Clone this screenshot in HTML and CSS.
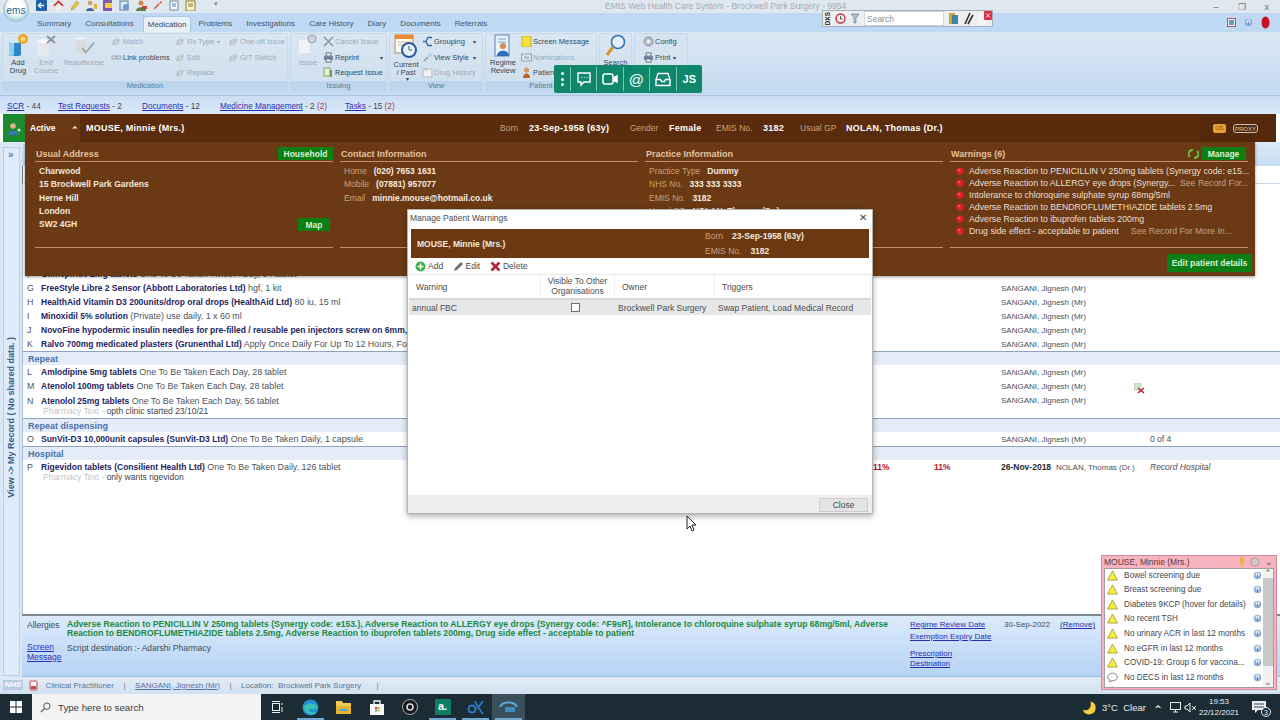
FILE: index.html
```html
<!DOCTYPE html>
<html lang="en">
<head>
  <meta charset="UTF-8" />
  <meta name="viewport" content="width=device-width, initial-scale=1.0"/>
  <title>EMIS Web Health Care System</title>
  <link rel="stylesheet" href="styles.css">
</head>
<body>
  <svg class="defs" width="0" height="0">
    <symbol id="pill" viewBox="0 0 12 12">
      <path d="M2 5l5-3 3 3-2 5H4z" fill="#c9ced4"/><path d="M4 10l-2-1 1-4" fill="none" stroke="#9ea6ae"/><path d="M7 6l2-3" stroke="#b4b9a0"/>
    </symbol>
    <symbol id="warn" viewBox="0 0 12 12">
      <path d="M6 1l5.400 10H.6z" fill="#f6ee3a" stroke="#8d8a3c" stroke-width=".8"/>
    </symbol>
    <symbol id="info" viewBox="0 0 10 10">
      <circle cx="5" cy="5" r="4.200" fill="#8fb0d6"/><circle cx="5" cy="4" r="2.200" fill="#dbe7f3"/><path d="M5 4v4" stroke="#5f86b4"/>
    </symbol>
    <symbol id="dot" viewBox="0 0 8 8">
      <circle cx="4" cy="4" r="3.600" fill="#e2202a"/><circle cx="3.200" cy="3" r="1" fill="#f26a6a"/>
    </symbol>
    <symbol id="balloon" viewBox="0 0 11 11">
      <ellipse cx="5.500" cy="5" rx="4.800" ry="3.800" fill="#fff" stroke="#7a8088"/><path d="M3 8l-1 2 3-1" fill="#fff" stroke="#7a8088" stroke-width=".7"/>
    </symbol>
  </svg>

  <div class="app">
    <div class="titlebar">
      <div class="orb"><span>ems</span></div>
      <div class="quick">
        <svg width="11" height="11" viewBox="0 0 11 11"><rect width="11" height="11" rx="1" fill="#1f5fb0"/><path d="M8 5.500H3m2-2.500L2.500 5.500 5 8" stroke="#fff" stroke-width="1.500" fill="none"/></svg>
        <svg width="11" height="11" viewBox="0 0 12 11"><path d="M1 6l5-5 5 5" stroke="#d0312d" stroke-width="1.800" fill="none"/><path d="M3 6v5h6V6" fill="#f2efe6"/></svg>
        <svg width="11" height="11" viewBox="0 0 11 11"><path d="M2 10l1-3 5-6 2 2-5 6z" fill="#ecc92e" stroke="#9b7f12" stroke-width=".5"/></svg>
        <svg width="11" height="11" viewBox="0 0 11 11"><circle cx="4" cy="3" r="2.300" fill="#d59a62"/><path d="M0 11c0-4 8-4 8 0z" fill="#3c68a8"/><path d="M8 4h3v5H8z" fill="#e2b33c"/></svg>
        <svg width="11" height="11" viewBox="0 0 11 11"><rect x="1" width="9" height="11" fill="#7d5bb0"/><rect x="3" y="3" width="7" height="5" fill="#f2cc44"/></svg>
        <svg width="11" height="11" viewBox="0 0 11 11"><rect x="1" y="1" width="8" height="9" fill="#dfe8f2" stroke="#5b7ea8"/><circle cx="7" cy="7" r="3" fill="#6e9ad0"/></svg>
        <svg width="11" height="11" viewBox="0 0 11 11"><circle cx="5" cy="3" r="2.500" fill="#d2854a"/><path d="M0 11c0-5 10-5 10 0z" fill="#4a8a4a"/><rect x="6" y="6" width="5" height="3" fill="#c43b32"/></svg>
        <svg width="11" height="11" viewBox="0 0 11 11"><path d="M1 10l3-2 6-6-1-1-6 6z" fill="#d64a2c"/><path d="M7 3l2 2" stroke="#f3f3f3"/></svg>
        <svg width="11" height="11" viewBox="0 0 11 11"><rect x="1" y="1" width="8" height="9" fill="#f4f6f8" stroke="#7a8a9a"/><path d="M3 4h4M3 6h4" stroke="#4a88c0"/></svg>
        <svg width="11" height="11" viewBox="0 0 11 11"><rect x="1" y="1" width="9" height="10" fill="#fbf2c4" stroke="#8a7a3a"/><path d="M3 4h5M3 6h5" stroke="#8a7a3a"/></svg>
        <span class="quick-more">▾</span>
      </div>
      <div class="title-text">EMIS Web Health Care System - Brockwell Park Surgery - 9954</div>
      <div class="win-controls"><span>–</span><span>❐</span><span>x</span></div>
    </div>

    <div class="tabs">
      <span class="tab">Summary</span>
      <span class="tab">Consultations</span>
      <span class="tab active">Medication</span>
      <span class="tab">Problems</span>
      <span class="tab">Investigations</span>
      <span class="tab">Care History</span>
      <span class="tab">Diary</span>
      <span class="tab">Documents</span>
      <span class="tab">Referrals</span>
      <div class="tab-icons">
        <svg width="9" height="9" viewBox="0 0 9 9"><rect x=".5" y=".5" width="8" height="8" fill="#f0f4f8" stroke="#c04a5a"/><rect x="2" y="2" width="5" height="5" fill="#6a94c8"/></svg>
        <svg width="9" height="9"><use href="#info"/></svg>
        <svg width="9" height="13" viewBox="0 0 9 13"><ellipse cx="4.500" cy="6.500" rx="4" ry="6" fill="#c8141e"/></svg>
      </div>
    </div>

    <div class="ribbon">
      <div class="group group-med">
        <div class="group-body">
          <div class="big btn-add">
            <svg width="22" height="24" viewBox="0 0 22 24"><rect x="2" y="7" width="12" height="15" rx="2" fill="#2f86c4"/><rect x="2" y="7" width="5" height="15" rx="2" fill="#8fd0ee"/><ellipse cx="8" cy="7" rx="6" ry="2" fill="#cfe9f6"/><circle cx="16" cy="5" r="5" fill="#f4a11e"/><circle cx="16" cy="5" r="2.500" fill="#ffe27a"/></svg>
            <span>Add<br>Drug</span>
          </div>
          <div class="big off btn-end">
            <svg width="22" height="24" viewBox="0 0 22 24"><rect x="2" y="7" width="12" height="15" rx="2" fill="#e6e9ec"/><ellipse cx="8" cy="7" rx="6" ry="2" fill="#f6f7f8"/><path d="M12 2l8 7m0-7l-8 7" stroke="#8f959b" stroke-width="2"/></svg>
            <span>End<br>Course</span>
          </div>
          <div class="big off btn-reauth">
            <svg width="24" height="24" viewBox="0 0 26 26"><path d="M4 5h11v16H4z" fill="#d8dcdf"/><ellipse cx="9.500" cy="5" rx="5.500" ry="2" fill="#eceef0"/><path d="M11 15l4 5 9-11" stroke="#a2aba0" stroke-width="2" fill="none"/></svg>
            <span>Reauthorise</span>
          </div>
          <div class="col col-match">
            <div class="item off"><svg width="11" height="11"><use href="#pill"/></svg>Match</div>
            <div class="item"><svg width="11" height="9" viewBox="0 0 11 9"><path d="M1 3h4v3H1zM6 3h4v3H6z" fill="none" stroke="#9aa5b0"/></svg>Link problems</div>
          </div>
          <div class="col col-rx">
            <div class="item off"><svg width="11" height="11"><use href="#pill"/></svg>Rx Type <i class="arrow">▾</i></div>
            <div class="item off"><svg width="11" height="11"><use href="#pill"/></svg>Edit</div>
            <div class="item off"><svg width="11" height="11"><use href="#pill"/></svg>Replace</div>
          </div>
          <div class="col">
            <div class="item off"><svg width="11" height="11"><use href="#pill"/></svg>One-off Issue</div>
            <div class="item off"><svg width="11" height="11"><use href="#pill"/></svg>G/T Switch</div>
          </div>
        </div>
        <div class="group-label">Medication</div>
      </div>

      <div class="group group-issuing">
        <div class="group-body">
          <div class="big off btn-issue">
            <svg width="22" height="24" viewBox="0 0 22 24"><rect x="2" y="6" width="11" height="13" fill="#f0f2f4"/><circle cx="15" cy="5" r="4" fill="#cdd3d8" stroke="#9aa2a8"/></svg>
            <span>Issue</span>
          </div>
          <div class="col">
            <div class="item off"><svg width="11" height="11" viewBox="0 0 11 11"><path d="M1 1l9 9m0-9l-9 9" stroke="#8e9aa2" stroke-width="1.600"/></svg>Cancel Issue</div>
            <div class="item"><svg width="11" height="11" viewBox="0 0 11 11"><rect x="3" y="1" width="5" height="3" fill="#fff" stroke="#5d6f85"/><rect x="1" y="4" width="9" height="4" fill="#7186a0"/><rect x="3" y="7" width="5" height="3" fill="#fff" stroke="#5d6f85"/></svg>Reprint <i class="arrow wide">▾</i></div>
            <div class="item"><svg width="11" height="11" viewBox="0 0 11 11"><rect x="1" y="1" width="6" height="8" fill="#e5f2dc" stroke="#6cab50"/><path d="M8 3v7" stroke="#8a8a5a" stroke-width="2"/></svg>Request Issue</div>
          </div>
        </div>
        <div class="group-label">Issuing</div>
      </div>

      <div class="group group-view">
        <div class="group-body">
          <div class="big btn-current">
            <svg width="24" height="26" viewBox="0 0 24 26"><rect x="1" y="1" width="18" height="18" fill="#fbfbf6" stroke="#a88a60"/><rect x="1" y="1" width="18" height="4" fill="#ea8a2a"/><path d="M4 8h12M4 11h6" stroke="#d4b48a"/><circle cx="15" cy="16" r="7" fill="#e8f0f8" stroke="#2a5a9a" stroke-width="2"/><path d="M15 12v4h3" stroke="#2a5a9a" fill="none"/></svg>
            <span>Current<br>/ Past</span>
            <i class="arrow">▾</i>
          </div>
          <div class="col">
            <div class="item"><svg width="11" height="11" viewBox="0 0 11 11"><path d="M1 5.500h3m6-4H6L4 5.500l2 4h4" fill="none" stroke="#2b6cb5" stroke-width="1.300"/></svg>Grouping <i class="arrow wide">▾</i></div>
            <div class="item"><svg width="11" height="11" viewBox="0 0 11 11"><path d="M2 9l4-4" stroke="#8a9098" stroke-width="1.500"/><circle cx="8" cy="3" r="2" fill="#bcd0e4"/></svg>View Style <i class="arrow wide">▾</i></div>
            <div class="item off"><svg width="11" height="11" viewBox="0 0 11 11"><rect x="1" y="2" width="9" height="8" fill="#eef0f2" stroke="#b6bcc2"/><path d="M3 1h2v3H3z" fill="#d8b898"/></svg>Drug History</div>
          </div>
        </div>
        <div class="group-label">View</div>
      </div>

      <div class="group group-patient">
        <div class="group-body">
          <div class="big btn-regime">
            <svg width="20" height="24" viewBox="0 0 20 24"><rect x="2" y="1" width="14" height="21" fill="#e8f1fa" stroke="#5d84b5"/><path d="M5 5h8M5 8h8" stroke="#7fa4cf"/><circle cx="10" cy="12" r="3" fill="#cf8e56"/><path d="M4 22c0-7 12-7 12 0z" fill="#2e6fb6"/></svg>
            <span>Regime<br>Review</span>
          </div>
          <div class="col col-patient">
            <div class="item"><svg width="11" height="11" viewBox="0 0 11 11"><rect x="1" y="0" width="9" height="11" rx="1" fill="#f6e23e" stroke="#c8ac28"/></svg>Screen Message</div>
            <div class="item off"><svg width="11" height="9" viewBox="0 0 11 9"><rect x=".5" y="1" width="10" height="7" fill="none" stroke="#9aa5b0"/><rect x="3" y="3" width="5" height="3" fill="#b8c0c8"/></svg>Nominations</div>
            <div class="item"><svg width="11" height="11" viewBox="0 0 11 11"><circle cx="5.500" cy="3" r="2.500" fill="#d99a5e"/><path d="M2 11c0-6 7-6 7 0z" fill="#b5612e"/></svg>Patient Info</div>
          </div>
        </div>
        <div class="group-label">Patient</div>
      </div>

      <div class="group group-search">
        <div class="group-body">
          <div class="big btn-search">
            <svg width="22" height="24" viewBox="0 0 22 24"><circle cx="13" cy="8" r="6.500" fill="#e4f0fb" stroke="#2e74c0" stroke-width="1.600"/><path d="M8 13l-6 8" stroke="#d8942a" stroke-width="3"/></svg>
            <span>Search</span>
          </div>
        </div>
      </div>

      <div class="group group-config">
        <div class="group-body">
          <div class="col">
            <div class="item"><svg width="11" height="11" viewBox="0 0 11 11"><circle cx="5.500" cy="5.500" r="4.500" fill="#b8bec4" stroke="#8a9098"/><circle cx="5.500" cy="5.500" r="1.800" fill="#eef0f2"/></svg>Config</div>
            <div class="item"><svg width="11" height="11" viewBox="0 0 11 11"><rect x="3" y="1" width="5" height="3" fill="#fff" stroke="#5d6f85"/><rect x="1" y="4" width="9" height="4" fill="#7186a0"/><rect x="3" y="7" width="5" height="3" fill="#fff" stroke="#5d6f85"/></svg>Print <i class="arrow">▾</i></div>
          </div>
        </div>
      </div>
    </div>

    <div class="links">
      <span class="link-scr"><a>SCR</a> - 44</span>
      <span class="link-test"><a>Test Requests</a> - 2</span>
      <span class="link-docs"><a>Documents</a> - 12</span>
      <span class="link-med"><a>Medicine Management</a> - 2 <b>(2)</b></span>
      <span><a>Tasks</a> - 15 <b>(2)</b></span>
    </div>

    <div class="patient-bar">
      <div class="status-tile">
        <svg width="13" height="13" viewBox="0 0 13 13"><circle cx="5" cy="4" r="2.800" fill="#e9b383"/><path d="M0 13c0-6 10-6 10 0z" fill="#3f74b8"/><circle cx="11" cy="8" r="1.600" fill="#cfe6c4"/></svg>
      </div>
      <div class="status-active"><span>Active</span><i>⌃</i></div>
      <div class="bar-name">MOUSE, Minnie (Mrs.)</div>
      <div class="bar-facts">
        <span class="f-born"><em>Born</em>23-Sep-1958 (63y)</span>
        <span class="f-gender"><em>Gender</em>Female</span>
        <span class="f-emis"><em>EMIS No.</em>3182</span>
        <span class="f-gp"><em>Usual GP</em>NOLAN, Thomas (Dr.)</span>
      </div>
      <div class="bar-badges"><span class="os">OS</span><span class="proxy">PROXY</span></div>
    </div>

    <div class="workspace">
      <div class="side">
        <span class="side-chevron">»</span>
        <span class="side-text">View -&gt; My Record ( No shared data. )</span>
      </div>
      <div class="main">
        <div class="main-tabs"></div>
        <div class="main-filter"></div>
        <div class="list">
          <div class="row"><span>F</span><span class="rx"><b>Glimepiride 2mg tablets</b> One To Be Taken Twice A Day, 84 tablet</span></div>
          <div class="row"><span>G</span><span class="rx"><b>FreeStyle Libre 2 Sensor (Abbott Laboratories Ltd)</b> hgf, 1 kit</span><span class="who">SANGANI, Jignesh (Mr)</span></div>
          <div class="row"><span>H</span><span class="rx"><b>HealthAid Vitamin D3 200units/drop oral drops (HealthAid Ltd)</b> 80 iu, 15 ml</span><span class="who">SANGANI, Jignesh (Mr)</span></div>
          <div class="row"><span>I</span><span class="rx"><b>Minoxidil 5% solution</b> (Private) use daily, 1 x 60 ml</span><span class="who">SANGANI, Jignesh (Mr)</span></div>
          <div class="row"><span>J</span><span class="rx"><b>NovoFine hypodermic insulin needles for pre-filled / reusable pen injectors screw on 6mm,</b></span><span class="who">SANGANI, Jignesh (Mr)</span></div>
          <div class="row"><span>K</span><span class="rx"><b>Ralvo 700mg medicated plasters (Grunenthal Ltd)</b> Apply Once Daily For Up To 12 Hours, Follow</span><span class="who">SANGANI, Jignesh (Mr)</span></div>
          <div class="group-row">Repeat</div>
          <div class="row"><span>L</span><span class="rx"><b>Amlodipine 5mg tablets</b> One To Be Taken Each Day, 28 tablet</span><span class="who">SANGANI, Jignesh (Mr)</span></div>
          <div class="row"><span>M</span><span class="rx"><b>Atenolol 100mg tablets</b> One To Be Taken Each Day, 28 tablet</span><span class="who">SANGANI, Jignesh (Mr)</span><span class="extra">
            <svg width="11" height="11" viewBox="0 0 11 11"><rect y="0" width="7" height="7" fill="#cfe6c8" stroke="#a8c8a4" stroke-width=".6"/><path d="M4 5l6 5m0-5l-6 5" stroke="#b0203a" stroke-width="1.600"/></svg></span></div>
          <div class="row row-n"><span>N</span><span class="rx"><b>Atenolol 25mg tablets</b> One To Be Taken Each Day, 56 tablet</span><span class="who">SANGANI, Jignesh (Mr)</span></div>
          <div class="sub"><em>Pharmacy Text -</em> opth clinic started 23/10/21</div>
          <div class="group-row">Repeat dispensing</div>
          <div class="row"><span>O</span><span class="rx"><b>SunVit-D3 10,000unit capsules (SunVit-D3 Ltd)</b> One To Be Taken Daily, 1 capsule</span><span class="who">SANGANI, Jignesh (Mr)</span><span class="extra">0 of 4</span></div>
          <div class="group-row">Hospital</div>
          <div class="row row-p"><span>P</span><span class="rx"><b>Rigevidon tablets (Consilient Health Ltd)</b> One To Be Taken Daily, 126 tablet</span>
            <span class="pct">11%</span><span class="pct">11%</span>
            <span class="who"><b>26-Nov-2018</b><i>NOLAN, Thomas (Dr.)</i></span><span class="extra hospital">Record Hospital</span></div>
          <div class="sub"><em>Pharmacy Text -</em> only wants rigevidon</div>
        </div>
        <div class="bottom">
          <div class="bottom-left">
            <span>Allergies</span>
            <span class="allergy-text">Adverse Reaction to PENICILLIN V 250mg tablets (Synergy code: e153.), Adverse Reaction to ALLERGY eye drops (Synergy code: ^F9sR], Intolerance to chloroquine sulphate syrup 68mg/5ml, Adverse<br>Reaction to BENDROFLUMETHIAZIDE tablets 2.5mg, Adverse Reaction to ibuprofen tablets 200mg, Drug side effect - acceptable to patient</span>
            <a>Screen<br>Message</a>
            <span>Script destination :- Adarshi Pharmacy</span>
          </div>
          <div class="bottom-right">
            <div class="dates">
              <div><a>Regime Review Date</a><a>Exemption Expiry Date</a></div>
              <span>30-Sep-2022</span>
              <a>(Remove)</a>
            </div>
            <a class="presc">Prescription<br>Destination</a>
          </div>
        </div>
      </div>
    </div>

    <div class="statusbar">
      <span class="nhs">NHS</span>
      <svg width="9" height="11" viewBox="0 0 9 11"><rect x="1" y="1" width="7" height="9" rx="1" fill="#eef0f2" stroke="#c04a4a"/><rect x="2" y="6" width="5" height="3" fill="#c04a4a"/></svg>
      <span class="role">Clinical Practitioner</span><span class="pipe">|</span>
      <a>SANGANI, Jignesh (Mr)</a><span class="pipe">|</span>
      <span class="loc">Location:&nbsp; Brockwell Park Surgery</span><span class="pipe">|</span>
    </div>

    <div class="taskbar">
      <div class="start"><svg width="12" height="12" viewBox="0 0 12 12" fill="#fff"><path d="M0 0h5.500v5.500H0zM6.500 0H12v5.500H6.500zM0 6.500h5.500V12H0zM6.500 6.500H12V12H6.500z"/></svg></div>
      <div class="search-box">
        <svg width="11" height="11" viewBox="0 0 12 12"><circle cx="7.500" cy="4.500" r="3.500" fill="none" stroke="#444"/><path d="M5 7L1 11" stroke="#444" stroke-width="1.200"/></svg>
        <span>Type here to search</span>
      </div>
      <div class="tb-icon">
        <svg width="12" height="12" viewBox="0 0 12 12" fill="none" stroke="#e8eef2"><rect x=".5" y="2.500" width="7" height="7"/><path d="M10 2v2M10 6v5M0 .5h8M0 11.500h8"/></svg>
      </div>
      <div class="tb-icon run">
        <svg width="17" height="17" viewBox="0 0 17 17"><circle cx="8.500" cy="8.500" r="8" fill="#1f8fd6"/><path d="M1 9c2-5 10-6 14-2 1 2 0 3-2 3H7c0 3 4 4 8 3-3 4-12 3-13-4" fill="#35c2b0"/></svg>
      </div>
      <div class="tb-icon">
        <svg width="15" height="13" viewBox="0 0 15 13"><path d="M0 0h6l1 2h8v11H0z" fill="#f2c94c"/><rect y="5" width="15" height="8" fill="#e6b32e"/><rect x="4" y="8" width="7" height="2" fill="#4ca4dc"/></svg>
      </div>
      <div class="tb-icon">
        <svg width="14" height="15" viewBox="0 0 14 15"><rect y="4" width="14" height="11" fill="#f4f6f8"/><path d="M4 4V1h6v3" fill="none" stroke="#f4f6f8" stroke-width="1.300"/><path d="M5 7h2v2H5z" fill="#e0452c"/><path d="M7.500 7h2v2h-2z" fill="#7cb82e"/><path d="M5 9.500h2v2H5z" fill="#2d9fd8"/><path d="M7.500 9.500h2v2h-2z" fill="#f0b400"/></svg>
      </div>
      <div class="tb-icon">
        <svg width="16" height="16" viewBox="0 0 16 16"><circle cx="8" cy="8" r="7.500" fill="#161a1c" stroke="#c8ccd0" stroke-width=".8"/><circle cx="8" cy="8" r="3" fill="none" stroke="#d8dcdf" stroke-width="1.600"/></svg>
      </div>
      <div class="tb-icon run"><span class="app-a">a.</span></div>
      <div class="tb-icon run">
        <svg width="17" height="15" viewBox="0 0 17 15"><circle cx="5" cy="9" r="3.500" fill="none" stroke="#2a78c8" stroke-width="2"/><path d="M8 1c1 3 2 5 8 13M16 1c-2 3-3 5-6 7" stroke="#2a78c8" stroke-width="1.800" fill="none"/></svg>
      </div>
      <div class="tb-icon run current">
        <svg width="19" height="13" viewBox="0 0 19 13"><path d="M1 6c2-6 15-6 17 0" fill="none" stroke="#5aaad8" stroke-width="2"/><rect x="6" y="6" width="10" height="5" fill="#3f8cc0"/></svg>
      </div>
      <div class="tray">
        <svg class="moon" width="14" height="15" viewBox="0 0 15 15"><path d="M9 1a7 7 0 1 1-8 9c5 2 10-2 8-9z" fill="#f4cf3e"/></svg>
        <span class="weather">3°C&nbsp; Clear</span>
        <span class="tray-up">⌃</span>
        <svg class="tray-net" width="12" height="11" viewBox="0 0 12 11" fill="none" stroke="#e6ebef"><rect x="1.500" y=".5" width="10" height="7"/><path d="M4 10h5M6.500 8v2"/></svg>
        <svg class="tray-vol" width="13" height="11" viewBox="0 0 13 11" fill="none" stroke="#e6ebef"><path d="M1 4h2l3-3v9L3 7H1z"/><path d="M8 4l4 4m0-4L8 8"/></svg>
        <div class="clock"><span>19:53</span><span>22/12/2021</span></div>
        <div class="notif">
          <svg width="14" height="13" viewBox="0 0 14 13"><path d="M0 0h14v9H6l-3 3V9H0z" fill="#e9eef2"/><path d="M2 3h10M2 6h10" stroke="#33444e"/></svg>
          <span>3</span>
        </div>
      </div>
    </div>
  </div>

  <!-- Patient banner dropdown -->
  <div class="banner">
    <div class="banner-col">
      <div class="banner-head"><span>Usual Address</span><button class="green">Household</button></div>
      <div class="address">
        <span>Charwood</span><span>15 Brockwell Park Gardens</span><span>Herne Hill</span><span>London</span>
        <span class="address-last">SW2 4GH<button class="green map">Map</button></span>
      </div>
    </div>
    <div class="banner-col">
      <div class="banner-head"><span>Contact Information</span></div>
      <div class="pairs">
        <span><em>Home</em>(020) 7653 1631</span>
        <span><em>Mobile</em>(07881) 957077</span>
        <span><em>Email</em>minnie.mouse@hotmail.co.uk</span>
      </div>
    </div>
    <div class="banner-col">
      <div class="banner-head"><span>Practice Information</span></div>
      <div class="pairs">
        <span><em>Practice Type</em>Dummy</span>
        <span><em>NHS No.</em>333 333 3333</span>
        <span><em>EMIS No.</em>3182</span>
        <span><em>Usual GP</em>NOLAN, Thomas (Dr.)</span>
      </div>
    </div>
    <div class="banner-col">
      <div class="banner-head">
        <span>Warnings (6)</span>
        <svg width="11" height="12" viewBox="0 0 11 12" fill="none" stroke="#63c23a" stroke-width="2"><path d="M2 9A4 4 0 0 1 5 2M9 3a4 4 0 0 1-3 7"/></svg>
        <button class="green manage">Manage</button>
      </div>
      <ul class="warnings">
        <li><svg width="8" height="8"><use href="#dot"/></svg><span>Adverse Reaction to PENICILLIN V 250mg tablets (Synergy code: e15...</span></li>
        <li><svg width="8" height="8"><use href="#dot"/></svg><span>Adverse Reaction to ALLERGY eye drops (Synergy...</span><i>See Record For...</i></li>
        <li><svg width="8" height="8"><use href="#dot"/></svg><span>Intolerance to chloroquine sulphate syrup 68mg/5ml</span></li>
        <li><svg width="8" height="8"><use href="#dot"/></svg><span>Adverse Reaction to BENDROFLUMETHIAZIDE tablets 2.5mg</span></li>
        <li><svg width="8" height="8"><use href="#dot"/></svg><span>Adverse Reaction to ibuprofen tablets 200mg</span></li>
        <li><svg width="8" height="8"><use href="#dot"/></svg><span>Drug side effect - acceptable to patient</span><i>See Record For More In...</i></li>
      </ul>
    </div>
    <button class="green edit-details">Edit patient details</button>
  </div>

  <!-- Manage warnings dialog -->
  <div class="dialog">
    <div class="dialog-title"><span>Manage Patient Warnings</span><span class="dialog-x">✕</span></div>
    <div class="dialog-head">
      <span class="dialog-name">MOUSE, Minnie (Mrs.)</span>
      <div class="dialog-facts">
        <span><em>Born</em>23-Sep-1958 (63y)</span>
        <span><em>EMIS No.</em>3182</span>
      </div>
    </div>
    <div class="dialog-tools">
      <span><svg width="11" height="11" viewBox="0 0 11 11"><circle cx="5.500" cy="5.500" r="5" fill="#3cb04a"/><path d="M5.500 2.500v6M2.500 5.500h6" stroke="#fff" stroke-width="1.500"/></svg>Add</span>
      <span><svg width="11" height="11" viewBox="0 0 11 11"><path d="M1 10l1-3 6-6 2 2-6 6z" fill="#6a7268"/></svg>Edit</span>
      <span><svg width="11" height="11" viewBox="0 0 11 11"><path d="M1.500 1.500l8 8m0-8l-8 8" stroke="#b5243a" stroke-width="2.600"/></svg>Delete</span>
    </div>
    <div class="dialog-table">
      <div class="tr th">
        <span>Warning</span><span class="visible">Visible To Other Organisations</span><span>Owner</span><span>Triggers</span>
      </div>
      <div class="tr td">
        <span>annual FBC</span><span class="check-cell"><i class="check"></i></span><span>Brockwell Park Surgery</span><span>Swap Patient, Load Medical Record</span>
      </div>
    </div>
    <div class="dialog-foot"><button class="close-btn">Close</button></div>
  </div>

  <!-- Alerts popup -->
  <div class="popup">
    <div class="popup-title">
      <span>MOUSE, Minnie (Mrs.)</span>
      <svg width="6" height="10" viewBox="0 0 6 10"><rect x="1" width="4" height="7" rx="1" fill="#eeb23c"/><rect x="2" y="8" width="2" height="2" fill="#eeb23c"/></svg>
      <svg width="10" height="10" viewBox="0 0 10 10"><circle cx="5" cy="5" r="4" fill="#d8c8cc" stroke="#a89ca0"/></svg>
      <span class="popup-more">⌄</span>
    </div>
    <div class="popup-body">
      <div class="popup-list">
        <div class="alert"><svg width="11" height="11"><use href="#warn"/></svg><span>Bowel screening due</span><svg width="9" height="9"><use href="#info"/></svg></div>
        <div class="alert"><svg width="11" height="11"><use href="#warn"/></svg><span>Breast screening due</span><svg width="9" height="9"><use href="#info"/></svg></div>
        <div class="alert"><svg width="11" height="11"><use href="#warn"/></svg><span>Diabetes 9KCP (hover for details)</span><svg width="9" height="9"><use href="#info"/></svg></div>
        <div class="alert"><svg width="11" height="11"><use href="#warn"/></svg><span>No recent TSH</span><svg width="9" height="9"><use href="#info"/></svg></div>
        <div class="alert"><svg width="11" height="11"><use href="#warn"/></svg><span>No urinary ACR in last 12 months</span><svg width="9" height="9"><use href="#info"/></svg></div>
        <div class="alert"><svg width="11" height="11"><use href="#warn"/></svg><span>No eGFR in last 12 months</span><svg width="9" height="9"><use href="#info"/></svg></div>
        <div class="alert"><svg width="11" height="11"><use href="#warn"/></svg><span>COVID-19: Group 6 for vaccina...</span><svg width="9" height="9"><use href="#info"/></svg></div>
        <div class="alert"><svg width="11" height="11"><use href="#balloon"/></svg><span>No DECS in last 12 months</span><svg width="9" height="9"><use href="#info"/></svg></div>
        <div class="alert"><svg width="11" height="11"><use href="#balloon"/></svg></div>
      </div>
      <div class="popup-scroll"><span>⌃</span><i></i><span>⌄</span></div>
    </div>
  </div>

  <!-- Floating green widget -->
  <div class="widget">
    <span class="w-cell w-kebab"><i></i><i></i><i></i></span>
    <span class="w-cell"><svg width="16" height="16" viewBox="0 0 16 16" fill="none" stroke="#fff" stroke-width="1.400"><path d="M2 2h12v9H8l-3 3v-3H2z"/><path d="M5 6.500h.8M7.800 6.500h.8M10.600 6.500h.8"/></svg></span>
    <span class="w-cell"><svg width="16" height="14" viewBox="0 0 16 14" fill="none" stroke="#fff" stroke-width="1.500"><rect x="1" y="2" width="10" height="10" rx="2"/><path d="M11 6l4-2v6l-4-2" fill="#fff"/></svg></span>
    <span class="w-cell w-text at">@</span>
    <span class="w-cell"><svg width="16" height="15" viewBox="0 0 16 15" fill="none" stroke="#fff" stroke-width="1.400"><path d="M3 1.500h10l2 6v6H1v-6z"/><path d="M1 7.500h4.500l1 2h3l1-2H15"/></svg></span>
    <span class="w-cell w-text">JS</span>
  </div>

  <!-- DXS toolbar -->
  <div class="dxs">
    <span class="dxs-label">DXS</span>
    <svg width="11" height="11" viewBox="0 0 11 11"><circle cx="5.500" cy="5.500" r="4.500" fill="#f4f0f0" stroke="#c03040" stroke-width="1.400"/><path d="M5.500 3v3h2" stroke="#555" fill="none"/></svg>
    <svg width="10" height="11" viewBox="0 0 10 11"><path d="M1 1h8L6 5v5H4V5z" fill="#aac0d4" stroke="#5d7588" stroke-width=".6"/></svg>
    <span class="dxs-search">Search</span>
    <svg width="11" height="13" viewBox="0 0 11 13"><rect x="1" y="1" width="6" height="11" fill="#d8a030"/><rect x="4" y="3" width="6" height="9" fill="#3f84a8"/></svg>
    <svg width="11" height="13" viewBox="0 0 11 13"><path d="M2 12l5-11M5 12l5-9" stroke="#333" stroke-width="1.600"/></svg>
    <span class="dxs-blank"></span>
    <svg class="dxs-close" width="8" height="9" viewBox="0 0 8 9"><rect width="8" height="9" rx="1" fill="#d83040"/><path d="M2 2.500l4 4m0-4l-4 4" stroke="#fff"/></svg>
  </div>

  <svg class="cursor" width="12" height="17" viewBox="0 0 12 17"><path d="M1 1v13l3-3 2 5 2-1-2-5h4z" fill="#fff" stroke="#222"/></svg>
</body>
</html>
```
FILE: styles.css
```css
* {
  box-sizing: border-box;
}

html, body {
  margin: 0;
  width: 1280px;
  height: 720px;
  overflow: hidden;
}

body {
  position: relative;
  font-family: "Liberation Sans", Arial, sans-serif;
  font-size: 8px;
  color: #3c4650;
  background: #fff;
}

em, i {
  font-style: normal;
}

button {
  font-family: inherit;
}

.defs {
  position: absolute;
}

.app {
  display: flex;
  flex-direction: column;
  height: 720px;
}

/* Title bar */
.titlebar {
  height: 13px;
  position: relative;
  display: flex;
  align-items: center;
  background: #dfe7ef;
}

.orb {
  position: absolute;
  left: 3px;
  top: -4px;
  width: 26px;
  height: 26px;
  border-radius: 50%;
  background: radial-gradient(circle at 50% 40%, #ffffff 40%, #6fb3cf 100%);
  border: 1px solid #9fb9cc;
  display: flex;
  align-items: center;
  justify-content: center;
  z-index: 2;
}

.orb span {
  font-size: 10px;
  color: #1e6c90;
  margin-top: 3px;
}

.quick {
  margin-left: 36px;
  display: flex;
  gap: 5.6px;
  align-items: flex-start;
  height: 13px;
}

.quick svg {
  flex: none;
}

.quick-more {
  margin-left: 12px;
  font-size: 7px;
  color: #7b8a99;
}

.title-text {
  position: absolute;
  left: 605px;
  top: 1px;
  color: #a3adb6;
  font-size: 8.5px;
}

.win-controls {
  margin-left: auto;
  display: flex;
  gap: 19px;
  padding-right: 11px;
  font-size: 9px;
  color: #66717c;
}

/* Ribbon tabs */
.tabs {
  height: 19px;
  display: flex;
  align-items: flex-end;
  background: #bfd9f5;
  padding-left: 30px;
  font-size: 8px;
}

.tab {
  padding: 0 7px;
  height: 16px;
  line-height: 16px;
  color: #42566a;
}

.tab.active {
  background: #e8f1f9;
  border: 1px solid #a9c7e2;
  border-bottom: 0;
  border-radius: 3px 3px 0 0;
  margin-left: 2px;
  padding: 0 4px;
  color: #33475a;
}

.tab-icons {
  margin-left: auto;
  display: flex;
  align-items: center;
  gap: 8px;
  padding: 0 10px 0 0;
  height: 19px;
}

/* Ribbon groups */
.ribbon {
  height: 64px;
  display: flex;
  gap: 2px;
  padding: 1px 2px 3px;
  background: linear-gradient(#dbe8f5, #c4daf0);
  border-bottom: 1px solid #a9c7df;
  font-size: 7.5px;
}

.group {
  display: flex;
  flex-direction: column;
  background: linear-gradient(#dae6f2, #cfdfee);
  border: 1px solid #c8d9e8;
  border-radius: 2px;
}

.group-body {
  flex: 1;
  display: flex;
}

.group-label {
  height: 10px;
  line-height: 10px;
  text-align: center;
  background: #bdd5ec;
  color: #5c7a96;
}

.group-med { width: 286px; }
.group-issuing { width: 97px; }
.group-view { width: 94px; }
.group-patient { width: 112px; }
.group-search { width: 33px; }
.group-config { width: 54px; background: #d6e4f1; }

.big {
  display: flex;
  flex-direction: column;
  align-items: center;
  text-align: center;
  line-height: 8px;
  flex: none;
  color: #34475a;
}

.big span {
  margin-top: 1px;
}

.big.off,
.item.off {
  color: #9cabb8;
}

.btn-add { width: 30px; }
.btn-end { width: 26px; }
.btn-reauth { width: 50px; }
.btn-issue { width: 30px; margin-left: 2px; }
.btn-current { width: 32px; }
.btn-current .arrow { line-height: 4px; font-size: 6px; }
.btn-regime { width: 30px; margin-left: 2px; }
.btn-search { width: 31px; }

.col {
  display: flex;
  flex-direction: column;
  flex: none;
}

.col-match { width: 64px; margin-left: 2px; }
.col-rx { width: 53px; }
.col-patient { margin-left: 3px; }
.group-config .col { margin-left: 8px; }

.item {
  height: 15.5px;
  display: flex;
  align-items: center;
  gap: 1px;
  color: #344a60;
  white-space: nowrap;
}

.item svg {
  flex: none;
}

.arrow {
  font-size: 6px;
  margin-left: 2px;
}

.arrow.wide {
  margin-left: auto;
}

/* Link strip */
.links {
  height: 18px;
  display: flex;
  align-items: center;
  padding: 2px 0 0 7px;
  font-size: 8.2px;
  background: linear-gradient(#c9def5, #dbe9f8);
  color: #3c4650;
}

.link-scr { width: 51px; }
.link-test { width: 84px; }
.link-docs { width: 78px; }
.link-med { width: 125px; }

a {
  color: #2a2db0;
  text-decoration: underline;
}

.links b {
  font-weight: normal;
  color: #a33a4a;
}

/* Patient bar */
.patient-bar {
  height: 28px;
  margin: 0 4px 0 3px;
  display: flex;
  align-items: center;
  background: #5a2c0d;
  border-radius: 3px 3px 0 0;
  color: #fff;
  font-size: 9px;
  font-weight: bold;
  letter-spacing: 0.25px;
}

.status-tile {
  width: 22px;
  height: 28px;
  background: #1c8a2e;
  display: flex;
  align-items: center;
  justify-content: center;
}

.status-active {
  width: 55px;
  height: 28px;
  padding: 0 0 0 5px;
  display: flex;
  align-items: center;
  background: #6b3815;
  font-size: 8.5px;
  letter-spacing: 0;
}

.status-active i {
  margin-left: 15px;
  margin-top: 3px;
  font-size: 9px;
}

.bar-name {
  margin-left: 6px;
  width: 414px;
}

.bar-facts {
  display: flex;
}

.bar-facts em {
  display: inline-block;
  font-weight: normal;
  font-size: 8.5px;
  letter-spacing: 0;
  color: #c9a07c;
}

.f-born { width: 130px; }
.f-born em { width: 29px; }
.f-gender { width: 86px; }
.f-gender em { width: 39px; }
.f-emis { width: 84px; }
.f-emis em { width: 47px; }
.f-gp em { width: 46px; }

.bar-badges {
  margin-left: auto;
  width: 75px;
  height: 28px;
  padding-left: 12px;
  display: flex;
  align-items: center;
  gap: 7px;
  font-weight: normal;
  font-size: 6px;
  letter-spacing: 0;
  background: #54290b;
}

.os {
  width: 13px;
  height: 9px;
  line-height: 9px;
  text-align: center;
  background: #e6a132;
  color: #8a5a12;
  border-radius: 2px;
}

.proxy {
  width: 25px;
  height: 9px;
  line-height: 8px;
  text-align: center;
  border: 1px solid #c8c0b4;
  border-radius: 3px;
  color: #d4ccc0;
}

/* Main area */
.workspace {
  flex: 1;
  display: flex;
  min-height: 0;
  background: #d9e7f6;
  padding-bottom: 1px;
}

.side {
  width: 17px;
  margin: 5px 2px 1px 3px;
  flex: none;
  position: relative;
  background: #dfebf8;
  border: 1px solid #b9cfe6;
}

.side-chevron {
  position: absolute;
  left: 4px;
  top: 1px;
  color: #5f7fa0;
  font-size: 10px;
  font-weight: bold;
}

.side-text {
  position: absolute;
  left: 2px;
  bottom: 177px;
  writing-mode: vertical-rl;
  transform: rotate(180deg);
  font-size: 9px;
  font-weight: bold;
  color: #3a5f8a;
  white-space: nowrap;
}

.main {
  flex: 1;
  min-width: 0;
  display: flex;
  flex-direction: column;
}

.main-tabs {
  height: 24px;
  background: linear-gradient(#dbe9f8, #c5dcf5);
}

.main-filter {
  height: 18px;
  background: #fff;
  border-left: 1px solid #6c7f92;
  border-bottom: 1px solid #c4d4e4;
}

.list {
  flex: 1;
  padding-top: 83px;
  font-size: 8.9px;
  background: #fff;
  border-left: 1px solid #a8bcd0;
  color: #4c545c;
}

.row {
  height: 14px;
  display: grid;
  grid-template-columns: 14px 832px 61px 67px 149px 1fr;
  align-items: center;
  padding-left: 4px;
  white-space: nowrap;
}

.row .rx {
  grid-column: 2;
  overflow: hidden;
}

.row b {
  color: #25255f;
  font-size: 8.5px;
}

.row .who {
  grid-column: 5;
  font-size: 8px;
  color: #4a5058;
}

.row .extra {
  grid-column: 6;
  font-size: 8.5px;
  color: #4a5058;
}

.row-n {
  margin-top: 1px;
  height: 13px;
}

.row-p {
  height: 13px;
}

.row .pct {
  color: #b01c2e;
  font-weight: bold;
  font-size: 8.5px;
}

.row .who b {
  color: #2b2b2b;
  margin-right: 5px;
}

.hospital {
  font-style: italic;
}

.extra svg {
  display: block;
  margin-left: -16px;
  position: relative;
  top: 2px;
}

.sub {
  height: 9px;
  line-height: 9px;
  padding-left: 20px;
  font-size: 8.5px;
  color: #3e444c;
  margin-bottom: 2px;
}

.sub em {
  color: #c2c6ca;
}

.group-row {
  height: 14px;
  line-height: 14px;
  padding-left: 5px;
  background: #e4edf7;
  border-top: 1px solid #8ea4c0;
  color: #4a6fb0;
  font-weight: bold;
  font-size: 9px;
}

/* Bottom message pane */
.bottom {
  height: 63px;
  flex: none;
  display: flex;
  padding: 4px 0 0 5px;
  border-top: 2px solid #7c8a96;
  border-bottom: 1px solid #9fc0e2;
  background: linear-gradient(#dcebfb, #b5d3f5);
  color: #3e4a58;
  font-size: 8.5px;
}

.bottom-left {
  width: 883px;
  flex: none;
  display: grid;
  grid-template-columns: 40px 1fr;
  grid-auto-rows: min-content;
  row-gap: 5px;
  align-items: start;
}

.bottom-left > a {
  line-height: 9.5px;
}

.allergy-text {
  font-weight: bold;
  font-size: 8.65px;
  color: #1d8a3c;
  line-height: 9px;
  white-space: nowrap;
}

.bottom-right {
  font-size: 8px;
  white-space: nowrap;
}

.dates {
  display: flex;
  align-items: flex-start;
}

.dates div {
  display: flex;
  flex-direction: column;
  gap: 3px;
  width: 94px;
}

.dates span {
  width: 56px;
}

.presc {
  display: block;
  margin-top: 8px;
  line-height: 9.5px;
}

/* Status bar */
.statusbar {
  height: 16px;
  display: flex;
  align-items: center;
  gap: 9.5px;
  padding: 0 0 2px 3px;
  background: linear-gradient(#e1ebf5, #d2e1f0);
  font-size: 8px;
  color: #5a7594;
}

.nhs {
  width: 20px;
  height: 10px;
  line-height: 10px;
  background: #b8cbe0;
  color: #fff;
  font-weight: bold;
  font-style: italic;
  text-align: center;
}

.statusbar svg {
  margin-left: -3.5px;
}

.statusbar a {
  color: #5b6fa8;
}

.pipe {
  color: #6a7c8e;
}

.role {
  margin-left: -2px;
}

.loc {
  width: 126px;
  white-space: nowrap;
  color: #5a7594;
}

/* Taskbar */
.taskbar {
  height: 26px;
  display: flex;
  align-items: center;
  background: #1c2c35;
  color: #e9eef2;
}

.start {
  width: 32px;
  height: 26px;
  display: flex;
  align-items: center;
  justify-content: center;
}

.search-box {
  width: 229px;
  height: 26px;
  display: flex;
  align-items: center;
  gap: 7px;
  padding-left: 8px;
  background: #f2f3f4;
  color: #3a3a3a;
  font-size: 9.7px;
}

.tb-icon {
  width: 33px;
  height: 26px;
  display: flex;
  align-items: center;
  justify-content: center;
  position: relative;
}

.tb-icon.run::after {
  content: "";
  position: absolute;
  left: 3px;
  right: 3px;
  bottom: 0;
  height: 2px;
  background: #6fa8d0;
}

.tb-icon.current {
  background: #3b4f5b;
}

.app-a {
  width: 16px;
  height: 16px;
  line-height: 15px;
  text-align: center;
  background: #0f7d63;
  color: #fff;
  font-size: 11px;
  font-weight: bold;
}

.tray {
  margin-left: auto;
  display: flex;
  align-items: center;
  padding-right: 14px;
}

.moon {
  margin-right: 6px;
}

.weather {
  width: 44px;
  font-size: 9.5px;
  white-space: nowrap;
}

.tray-up {
  width: 10px;
  margin-left: 7px;
  font-size: 12px;
  line-height: 8px;
  padding-top: 5px;
}

.tray-net {
  margin-left: 6px;
}

.tray-vol {
  margin-left: 3px;
}

.clock {
  width: 40px;
  display: flex;
  flex-direction: column;
  align-items: center;
  font-size: 8px;
  line-height: 11px;
  margin: 0 13px 0 2px;
}

.notif {
  position: relative;
  height: 13px;
}

.notif span {
  position: absolute;
  right: -5px;
  bottom: -3px;
  width: 10px;
  height: 10px;
  line-height: 9px;
  text-align: center;
  font-size: 7px;
  border-radius: 50%;
  border: 1px solid #e9eef2;
  background: #1c2c35;
}

/* Banner dropdown */
.banner {
  position: absolute;
  left: 25px;
  top: 142px;
  width: 1230px;
  height: 134px;
  display: flex;
  gap: 7px;
  padding: 5px 6px 0 10px;
  background: #6b3a14;
  box-shadow: 0 1px 3px rgba(0,0,0,0.4);
  font-size: 8.5px;
  color: #fff;
}

.banner-col {
  width: 298px;
  height: 101px;
  border-bottom: 1px solid #c08e68;
}

.banner-head {
  height: 15px;
  display: flex;
  align-items: center;
  gap: 2px;
  border-bottom: 1px solid #c08e68;
  font-weight: bold;
  color: #e3c19f;
  padding-left: 1px;
  font-size: 9px;
}

.banner-head span {
  margin-right: auto;
}

.green {
  border: 0;
  background: #0d7e13;
  color: #d8f2d8;
  font-size: 8.5px;
  font-weight: bold;
  padding: 0;
  text-align: center;
}

.banner-head .green {
  width: 55px;
  height: 13px;
  margin-top: -1px;
}

.banner-head .manage {
  width: 45px;
  margin-right: 2px;
}

.address {
  display: flex;
  flex-direction: column;
  padding: 3px 0 0 4px;
  font-weight: bold;
  color: #f2e6da;
}

.address span {
  height: 13.3px;
  line-height: 13.3px;
}

.address-last {
  display: flex;
  justify-content: space-between;
}

.map {
  width: 32px;
  height: 13px;
  margin-right: 3px;
}

.pairs {
  display: flex;
  flex-direction: column;
  padding: 3px 0 0 4px;
  font-weight: bold;
  color: #f6ebe0;
}

.pairs span {
  height: 13.3px;
  line-height: 13.3px;
}

.pairs em {
  font-weight: normal;
  color: #c9a07c;
  margin-right: 7px;
}

.warnings {
  list-style: none;
  margin: 0;
  padding: 3px 16px 0 6px;
  color: #eadfd4;
  font-size: 8.75px;
}

.warnings li {
  height: 12px;
  display: flex;
  align-items: center;
  gap: 5px;
  white-space: nowrap;
}

.warnings li svg {
  flex: none;
}

.warnings i {
  margin-left: auto;
  color: #c5a184;
}

.edit-details {
  position: absolute;
  right: 3px;
  top: 112px;
  width: 85px;
  height: 18px;
}

/* Dialog */
.dialog {
  position: absolute;
  left: 407px;
  top: 209px;
  width: 466px;
  height: 305px;
  display: flex;
  flex-direction: column;
  background: #fff;
  border: 1px solid #b4b4b4;
  box-shadow: 0 2px 6px rgba(0,0,0,0.35);
  color: #4c4c4c;
  font-size: 8.5px;
}

.dialog-title {
  height: 19px;
  flex: none;
  display: flex;
  align-items: center;
  justify-content: space-between;
  padding: 0 5px 4px 2px;
}

.dialog-x {
  font-size: 10px;
  color: #444;
}

.dialog-head {
  height: 29px;
  flex: none;
  margin: 0 3px;
  display: flex;
  align-items: center;
  justify-content: space-between;
  background: #6b3812;
  color: #f4e8dc;
  font-weight: bold;
  padding-left: 6px;
}

.dialog-facts {
  width: 164px;
  display: flex;
  flex-direction: column;
  gap: 5px;
}

.dialog-facts em {
  font-weight: normal;
  color: #c9a07c;
  margin-right: 9px;
}

.dialog-tools {
  height: 16px;
  flex: none;
  display: flex;
  align-items: center;
  padding-left: 7px;
}

.dialog-tools span {
  width: 37.5px;
  display: flex;
  align-items: center;
  gap: 2px;
}

.dialog-table {
  flex: 1;
  margin: 0 1px;
}

.tr {
  display: grid;
  grid-template-columns: 132px 74px 100px 1fr;
  align-items: center;
}

.th {
  height: 26px;
  border-top: 1px solid #e8e8e8;
  border-bottom: 2px solid #d8d8d8;
}

.th span {
  padding-left: 7px;
  height: 23px;
  display: flex;
  align-items: center;
  border-right: 1px solid #f0f0f0;
}

.th .visible {
  text-align: center;
  line-height: 9.5px;
  padding: 0 3px;
}

.td {
  height: 15px;
  background: #e6e7e8;
}

.td span {
  padding-left: 3px;
}

.td .check-cell {
  display: flex;
  justify-content: center;
  padding: 0 6px 0 0;
}

.check {
  width: 9px;
  height: 9px;
  background: #fff;
  border: 1px solid #6e6e6e;
}

.dialog-foot {
  height: 18px;
  flex: none;
  display: flex;
  justify-content: flex-end;
  align-items: center;
  padding: 1px 4px 0 0;
  background: #eeeeee;
}

.close-btn {
  width: 49px;
  height: 14px;
  padding: 0;
  background: #e4e4e4;
  border: 1px solid #cdcdcd;
  color: #444;
  font-size: 8.5px;
}

/* Alerts popup */
.popup {
  position: absolute;
  left: 1101px;
  top: 555px;
  width: 176px;
  height: 135px;
  padding: 0 2px 2px;
  background: #f6b3c0;
  border: 1px solid #d08a98;
  color: #3f4750;
  font-size: 8.2px;
}

.popup-title {
  height: 12px;
  display: flex;
  align-items: center;
  gap: 5px;
  padding: 0 1px 0 0;
  color: #5a3a40;
  font-size: 8.5px;
}

.popup-title span:first-child {
  margin-right: auto;
}

.popup-more {
  line-height: 6px;
  color: #5a4a50;
}

.popup-body {
  height: 120px;
  display: flex;
  background: #fff;
  border: 1px solid #a89aa0;
  overflow: hidden;
}

.popup-list {
  flex: 1;
  margin-top: -1px;
}

.alert {
  height: 14.57px;
  display: flex;
  align-items: center;
  padding-left: 2px;
  white-space: nowrap;
}

.alert span {
  margin-left: 6px;
  margin-right: auto;
}

.alert svg:last-child:not(:first-child) {
  margin-right: 1px;
}

.popup-scroll {
  width: 10px;
  flex: none;
  display: flex;
  flex-direction: column;
  align-items: center;
  justify-content: space-between;
  background: #f1f1f1;
  color: #555;
  line-height: 9px;
  font-size: 9px;
}

.popup-scroll i {
  flex: 1;
  width: 100%;
  background: #c9c9c9;
  margin-bottom: 12px;
}

/* Green widget */
.widget {
  position: absolute;
  left: 554px;
  top: 65px;
  width: 148px;
  height: 28px;
  display: flex;
  background: #0e876b;
  border-radius: 2px;
  color: #fff;
}

.w-cell {
  width: 26.4px;
  display: flex;
  align-items: center;
  justify-content: center;
  border-left: 1px solid #7fc4b3;
  margin: 2px 0;
}

.w-kebab {
  width: 16px;
  border-left: 0;
  flex-direction: column;
  gap: 2.5px;
}

.w-kebab i {
  width: 3px;
  height: 3px;
  border-radius: 50%;
  background: #fff;
}

.w-text {
  font-size: 11px;
  font-weight: bold;
}

.at {
  font-size: 15px;
  font-weight: normal;
}

/* DXS toolbar */
.dxs {
  position: absolute;
  left: 822px;
  top: 10px;
  width: 171px;
  height: 17px;
  display: flex;
  align-items: center;
  gap: 4px;
  padding-left: 1px;
  background: #eceef0;
  border: 1px solid #a6aeb6;
}

.dxs-label {
  writing-mode: vertical-rl;
  transform: rotate(180deg);
  font-size: 6.5px;
  font-weight: bold;
  color: #222;
  width: 7px;
  text-align: center;
}

.dxs-search {
  width: 80px;
  height: 15px;
  line-height: 14px;
  padding-left: 2px;
  background: #fff;
  border: 1px solid #cfd4d8;
  color: #8b8f94;
  font-size: 8.5px;
}

.dxs-blank {
  width: 8px;
  height: 12px;
  background: #f5f6f7;
}

.dxs-close {
  position: absolute;
  right: 0;
  top: 0;
}

.cursor {
  position: absolute;
  left: 686px;
  top: 515px;
}
```
